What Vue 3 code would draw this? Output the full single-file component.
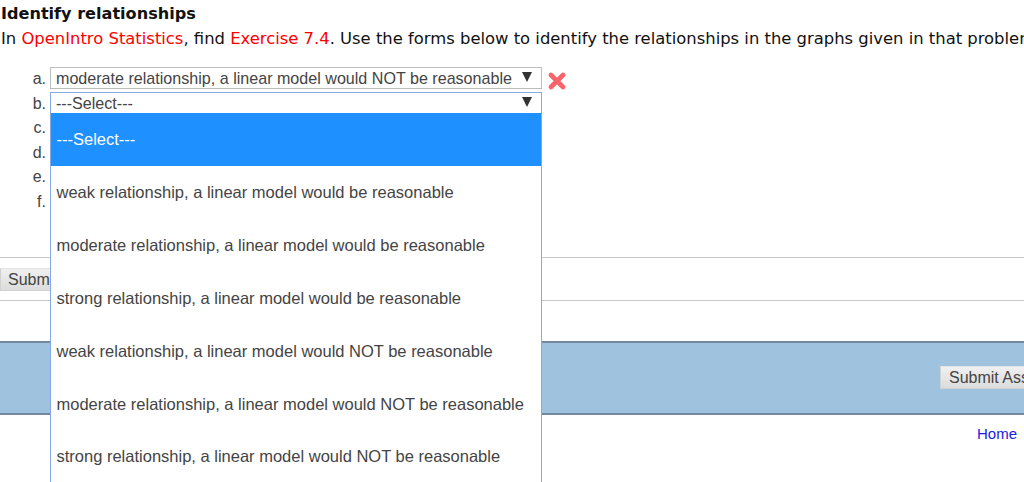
<script setup>
const options = [
  '---Select---',
  'weak relationship, a linear model would be reasonable',
  'moderate relationship, a linear model would be reasonable',
  'strong relationship, a linear model would be reasonable',
  'weak relationship, a linear model would NOT be reasonable',
  'moderate relationship, a linear model would NOT be reasonable',
  'strong relationship, a linear model would NOT be reasonable',
]
const rows = [
  { label: 'a.', text: options[5], wrong: true },
  { label: 'b.', text: options[0], open: true },
  { label: 'c.', text: '' },
  { label: 'd.', text: '' },
  { label: 'e.', text: '' },
  { label: 'f.', text: '' },
]
</script>

<template>
  <div class="page">
    <h1 class="title">Identify relationships</h1>
    <p class="intro">In <span class="red">OpenIntro Statistics</span>, find <span class="red">Exercise 7.4</span>. Use the forms below to identify the relationships in the graphs given in that problem.</p>

    <div class="rows">
      <div v-for="row in rows" :key="row.label" class="row">
        <span class="label">{{ row.label }}</span>
        <div class="select" :class="{ focused: row.open }">
          <span>{{ row.text }}</span>
          <span class="arrow"></span>
          <ul v-if="row.open" class="menu">
            <li v-for="(opt, i) in options" :key="opt" :class="{ active: i === 0 }">{{ opt }}</li>
          </ul>
        </div>
        <svg v-if="row.wrong" class="cross" viewBox="0 0 18 18">
          <path d="M3 3 L15 15 M15 3 L3 15" stroke="#f9636a" stroke-width="4.6" stroke-linecap="round" fill="none" />
        </svg>
      </div>
    </div>

    <div class="submit-row">
      <button class="btn">Submit Answer</button>
    </div>

    <div class="bar">
      <button class="btn">Submit Assignment</button>
    </div>

    <nav class="foot"><a class="home">Home</a></nav>
  </div>
</template>

<style scoped>
.page {
  width: 1024px;
  height: 482px;
  overflow: hidden;
  background: #fff;
  font-family: "Liberation Sans", Arial, sans-serif;
  color: #333;
}
.title {
  margin: 0;
  padding: 4px 0 0 1px;
  height: 19px;
  font: bold 16.1px/19px "DejaVu Sans", Verdana, sans-serif;
  color: #111;
  white-space: nowrap;
}
.intro {
  margin: 0;
  padding: 6px 0 0 1px;
  height: 20px;
  font: 16.4px/20px "DejaVu Sans", Verdana, sans-serif;
  color: #111;
  white-space: nowrap;
}
.red { color: #f00; }
.rows {
  padding-top: 18px;
  height: 190px;
  border-bottom: 1px solid #c8c8c8;
}
.row {
  display: flex;
  align-items: flex-start;
  height: 24.6px;
}
.label {
  width: 46px;
  text-align: right;
  font-size: 16px;
  line-height: 23px;
  color: #444;
  flex: none;
}
.select {
  position: relative;
  box-sizing: border-box;
  width: 492px;
  height: 22px;
  margin-left: 4px;
  padding-left: 5px;
  border: 1px solid #bdbdbd;
  background: #fff;
  font-size: 16.1px;
  line-height: 21px;
  color: #444;
  white-space: nowrap;
  flex: none;
}
.select.focused {
  border-color: #86a8e8;
  z-index: 5;
}
.arrow {
  position: absolute;
  right: 9px;
  top: 4px;
  border-left: 5px solid transparent;
  border-right: 5px solid transparent;
  border-top: 10px solid #333;
}
.menu {
  position: absolute;
  left: -1px;
  top: 20px;
  width: 492px;
  box-sizing: border-box;
  margin: 0;
  padding: 0;
  list-style: none;
  background: #fff;
  border: 1px solid #86a8e8;
  border-top: none;
  font-size: 16.5px;
}
.menu li {
  height: 52.85px;
  line-height: 53px;
  padding-left: 5.5px;
  color: #444;
}
.menu li.active {
  height: 53.6px;
  line-height: 53.6px;
  background: #1e90ff;
  color: #fff;
}
.cross {
  width: 18px;
  height: 18px;
  margin: 5px 0 0 6px;
  flex: none;
}
.submit-row {
  height: 43px;
  padding-top: 10px;
  box-sizing: border-box;
  border-bottom: 1px solid #c8c8c8;
}
.btn {
  display: block;
  height: 23px;
  padding: 0 8px;
  margin: 0;
  border: 1px solid #d2d2d2;
  border-top-color: #e4e4e4;
  background: linear-gradient(#f0f0f0, #dcdcdc);
  font: 16px/21px "Liberation Sans", Arial, sans-serif;
  color: #444;
  white-space: nowrap;
}
.submit-row .btn { padding-left: 7px; }
.bar {
  margin-top: 40px;
  height: 74px;
  box-sizing: border-box;
  padding: 23px 0 0 940px;
  background: #9fc2df;
  border-top: 2px solid #74899e;
  border-bottom: 2px solid #74899e;
  overflow: hidden;
}
.foot {
  padding: 10px 7px 0 0;
  text-align: right;
  font-size: 15px;
  line-height: 18px;
}
.home { color: #1a1ae0; }
</style>
